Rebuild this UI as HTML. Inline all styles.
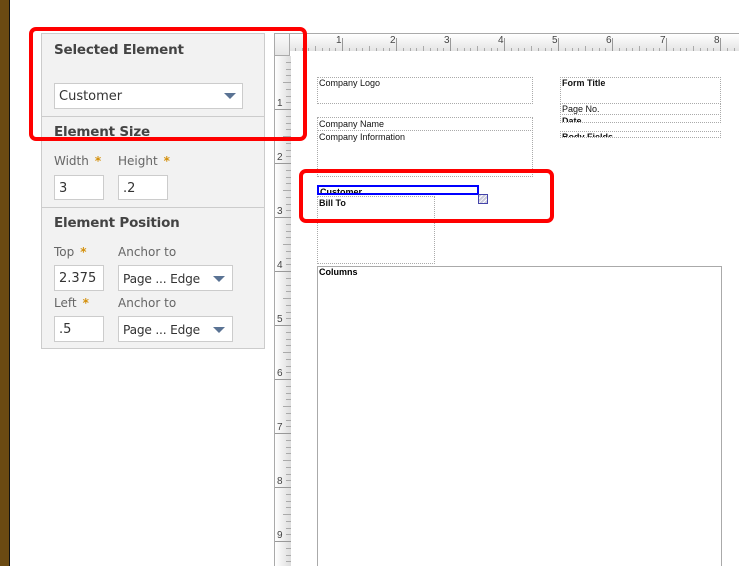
<!DOCTYPE html>
<html><head><style>
html,body{margin:0;width:739px;height:566px;overflow:hidden}
body{background:#fff;position:relative;font-family:"Liberation Sans",sans-serif}
.a{position:absolute}
.panel{left:41px;top:33px;width:222px;height:314px;background:#f2f2f2;border:1px solid #ccc}
.h{font-family:"DejaVu Sans",sans-serif;font-weight:bold;font-size:13.5px;color:#444;position:absolute;letter-spacing:-0.2px}
.lbl{font-family:"DejaVu Sans",sans-serif;font-size:12px;color:#666;position:absolute}
.lbl b{color:#d4900b;font-weight:bold;margin-left:6px}
.inp{position:absolute;background:#fff;border:1px solid #ccc;box-sizing:border-box;font-family:"DejaVu Sans",sans-serif;font-size:13px;color:#333;padding:5px 0 0 4px;overflow:hidden;white-space:nowrap}
.sel{font-size:12.2px;letter-spacing:-0.2px;padding-top:6px}
.tri{position:absolute;width:0;height:0;border-left:6px solid transparent;border-right:6px solid transparent;border-top:6px solid #5a7394}
.sep{position:absolute;left:0;width:222px;height:1px;background:#ccc}
.box{position:absolute;border:1px dotted #aaa;box-sizing:border-box;font-size:9px;color:#111;padding:0 0 0 1px;line-height:10px;overflow:hidden}
.red{position:absolute;border:4px solid #f00;border-radius:7px;box-sizing:border-box}
.rh{left:274px;top:33px;width:465px;height:17px;border-top:1px solid #aaa;background:linear-gradient(#fff,#e4e4e4)}
.rv{left:274px;top:56px;width:16px;height:510px;border-left:1px solid #aaa;background:linear-gradient(90deg,#fff,#ddd)}
.t{position:absolute;background:#999}
.n{position:absolute;font-size:10px;color:#444}
</style></head><body>
<div class="a" style="left:0;top:0;width:9px;height:566px;background:#6b4a12"></div>
<div class="a" style="left:9px;top:0;width:1px;height:566px;background:#111"></div>

<div class="a panel">
 <div class="h" style="left:12px;top:8px">Selected Element</div>
 <div class="inp" style="left:12px;top:49px;width:189px;height:26px">Customer</div>
 <div class="tri" style="left:182px;top:59px"></div>
 <div class="sep" style="top:82px"></div>
 <div class="h" style="left:12px;top:90px">Element Size</div>
 <div class="lbl" style="left:12px;top:120px">Width<b>*</b></div>
 <div class="lbl" style="left:76px;top:120px">Height<b>*</b></div>
 <div class="inp" style="left:12px;top:141px;width:50px;height:25px">3</div>
 <div class="inp" style="left:76px;top:141px;width:50px;height:25px">.2</div>
 <div class="sep" style="top:173px"></div>
 <div class="h" style="left:12px;top:181px">Element Position</div>
 <div class="lbl" style="left:12px;top:211px">Top<b>*</b></div>
 <div class="lbl" style="left:76px;top:211px">Anchor to</div>
 <div class="inp" style="left:12px;top:231px;width:50px;height:26px">2.375</div>
 <div class="inp sel" style="left:76px;top:231px;width:115px;height:26px">Page ... Edge</div>
 <div class="tri" style="left:171px;top:242px"></div>
 <div class="lbl" style="left:12px;top:262px">Left<b>*</b></div>
 <div class="lbl" style="left:76px;top:262px">Anchor to</div>
 <div class="inp" style="left:12px;top:282px;width:50px;height:26px">.5</div>
 <div class="inp sel" style="left:76px;top:282px;width:115px;height:26px">Page ... Edge</div>
 <div class="tri" style="left:171px;top:293px"></div>
</div>

<div class="a rh" id="rh"></div>
<div class="a" style="left:274px;top:33px;width:16px;height:23px;border:1px solid #aaa;box-sizing:border-box;background:linear-gradient(#fafafa,#e6e6e6)"></div>
<div class="a rv" id="rv"></div>

<div class="box" style="left:317px;top:77px;width:216px;height:27px">Company Logo</div>
<div class="box" style="left:560px;top:77px;width:161px;height:27px;font-weight:bold">Form Title</div>
<div class="box" style="left:560px;top:103px;width:161px;height:12px">Page No.</div>
<div class="box" style="left:560px;top:114px;width:161px;height:9px;font-weight:bold;line-height:13px">Date</div>
<div class="box" style="left:560px;top:131px;width:161px;height:7px;font-weight:bold;line-height:10px">Body Fields</div>
<div class="box" style="left:317px;top:117px;width:216px;height:14px;line-height:12px">Company Name</div>
<div class="box" style="left:317px;top:130px;width:216px;height:47px;line-height:13px">Company Information</div>
<div class="box" style="left:317px;top:196px;width:118px;height:68px;font-weight:bold;line-height:13px">Bill To</div>
<div class="a" style="left:317px;top:185px;width:162px;height:10px;border:2px solid #00f;box-sizing:border-box;font-size:9px;font-weight:bold;line-height:11px;overflow:hidden;padding-left:1px">Customer</div>
<div class="a" style="left:478px;top:194px;width:10px;height:10px;border:1px solid #44a;box-sizing:border-box;background:repeating-linear-gradient(135deg,#ccd 0 2px,#fff 2px 3px)"></div>
<div class="a" style="left:317px;top:266px;width:405px;height:300px;border:1px solid #aaa;border-bottom:none;box-sizing:border-box;font-size:9px;font-weight:bold;padding-left:1px;line-height:11px">Columns</div>

<div class="red" style="left:29px;top:27px;width:278px;height:114px"></div>
<div class="red" style="left:299px;top:169px;width:255px;height:54px"></div>

<script>
var rh=document.getElementById('rh'),rv=document.getElementById('rv'),s='',v='';
for(var i=0;i<9*8;i++){var x=289+i*6.75-274;if(x>465)break;var m=i%8;
 if(m==0&&i>0){s+='<div class="t" style="left:'+(x-1)+'px;top:4px;width:1px;height:13px"></div><div class="n" style="left:'+(x-7)+'px;top:1px">'+(i/8)+'</div>';}
 else if(i>0){var hh=m==4?5:3;s+='<div class="t" style="left:'+(x-1)+'px;top:'+(17-hh)+'px;width:1px;height:'+hh+'px;background:#aaa"></div>';}}
rh.innerHTML=s;
for(var i=1;i<11*8;i++){var yy=48+i*6.75+8-56;if(yy>510)break;var m=i%8;
 if(m==0){v+='<div class="t" style="left:0;top:'+(yy-1)+'px;width:16px;height:1px"></div><div class="n" style="left:2px;top:'+(yy-12)+'px">'+(i/8)+'</div>';}
 else{var w=m==4?8:5;v+='<div class="t" style="left:'+(16-w)+'px;top:'+(yy-1)+'px;width:'+w+'px;height:1px;background:#aaa"></div>';}}
rv.innerHTML=v;
</script>
</body></html>
